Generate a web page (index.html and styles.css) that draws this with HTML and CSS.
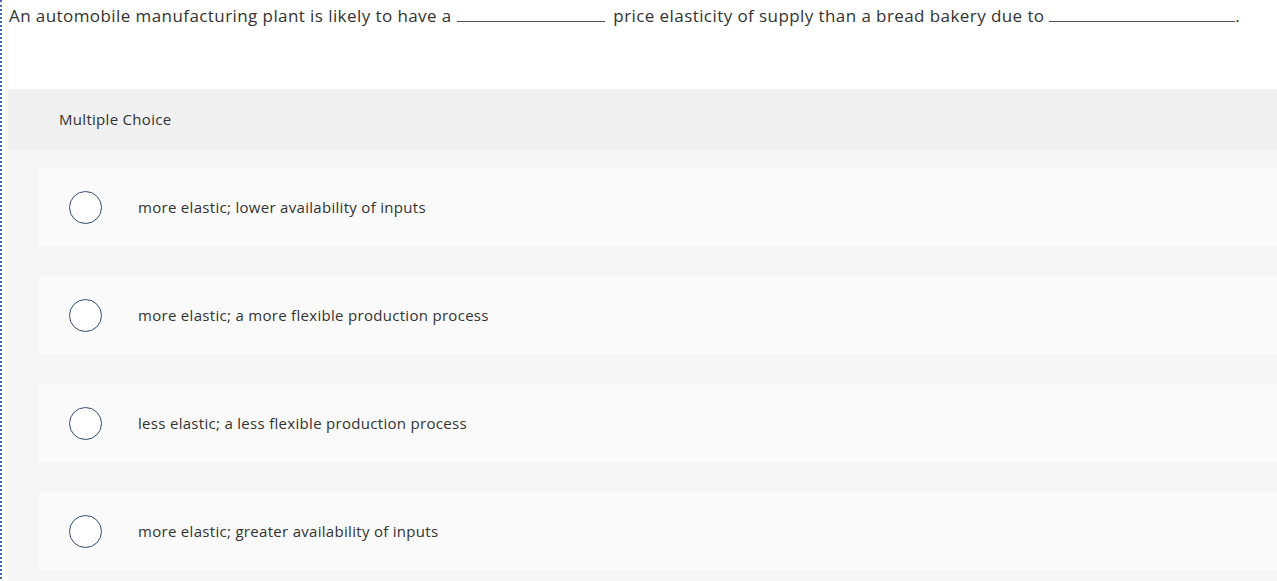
FILE: index.html
```html
<!DOCTYPE html>
<html>
<head>
<meta charset="utf-8">
<link rel="stylesheet" href="styles.css">
</head>
<body>
<div class="page">
  <p class="question">An automobile manufacturing plant is likely to have a <span class="blank b1"></span> price elasticity of supply than a bread bakery due to <span class="blank b2"></span>.</p>
  <div class="mc">
    <div class="mc-head">Multiple Choice</div>
    <div class="options">
      <div class="option"><span class="radio"></span><span class="label">more elastic; lower availability of inputs</span></div>
      <div class="option"><span class="radio"></span><span class="label">more elastic; a more flexible production process</span></div>
      <div class="option"><span class="radio"></span><span class="label">less elastic; a less flexible production process</span></div>
      <div class="option"><span class="radio"></span><span class="label">more elastic; greater availability of inputs</span></div>
    </div>
  </div>
</div>
</body>
</html>
```
FILE: styles.css
```css
html, body {
  margin: 0;
  padding: 0;
  background: #fff;
  overflow: hidden;
}
.page {
  border-left: 2px dotted #3b68b0;
  min-height: 581px;
  font-family: "Open Sans", "Liberation Sans", sans-serif;
  color: #333;
}
.question {
  margin: 0;
  padding: 5px 0 0 7px;
  height: 89px;
  box-sizing: border-box;
  font-size: 17px;
  letter-spacing: 0.42px;
  line-height: 22px;
  color: #333;
  white-space: nowrap;
}
.blank {
  display: inline-block;
  border-bottom: 1px solid #555;
  height: 15px;
  vertical-align: baseline;
}
.b1 { width: 148px; margin-right: 4px; }
.b2 { width: 186px; }
.mc {
  margin-left: 6px;
  background: #f5f5f5;
}
.mc-head {
  background: #f0f0f0;
  height: 60px;
  display: flex;
  align-items: center;
  padding-left: 51px;
  font-size: 15px;
  letter-spacing: 0.3px;
  color: #333;
}
.options {
  display: flex;
  flex-direction: column;
  gap: 29px;
  padding: 19px 0 20px 31px;
}
.option {
  background: #fafafa;
  height: 79px;
  display: flex;
  align-items: center;
  padding-left: 30px;
  gap: 36px;
}
.radio {
  width: 31px;
  height: 31px;
  border: 1.5px solid #2f4d70;
  border-radius: 50%;
  background: #fff;
  flex: none;
}
.label {
  font-size: 15px;
  letter-spacing: 0.3px;
  color: #333;
  margin-top: -2px;
}
```
